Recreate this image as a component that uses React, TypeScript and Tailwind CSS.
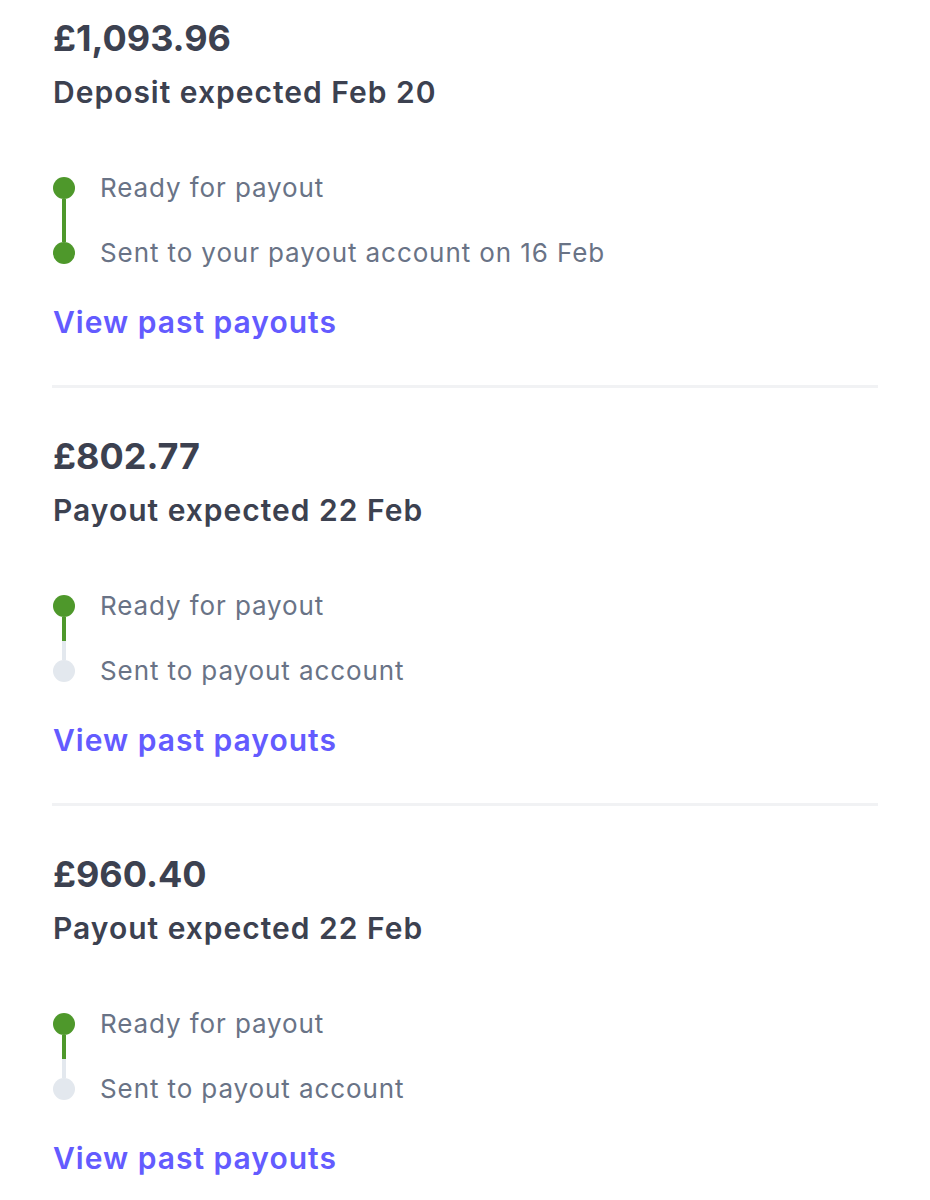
import { Fragment } from 'react';

type Payout = {
  amount: string;
  title: string;
  sentLabel: string;
  sent: boolean;
};

const PAYOUTS: Payout[] = [
  { amount: '£1,093.96', title: 'Deposit expected Feb 20', sentLabel: 'Sent to your payout account on 16 Feb', sent: true },
  { amount: '£802.77', title: 'Payout expected 22 Feb', sentLabel: 'Sent to payout account', sent: false },
  { amount: '£960.40', title: 'Payout expected 22 Feb', sentLabel: 'Sent to payout account', sent: false },
];

function Timeline({ sent, sentLabel }: { sent: boolean; sentLabel: string }) {
  return (
    <div className="flex gap-[25px] mt-[67px]">
      <div className="flex flex-col items-center w-[22px]">
        <div className="w-[22px] h-[22px] rounded-full bg-[#4e982b]" />
        {sent ? (
          <div className="w-[4px] h-[43px] bg-[#4e982b]" />
        ) : (
          <div className="flex flex-col w-[4px] h-[43px]">
            <div className="h-[24px] bg-[#4e982b]" />
            <div className="flex-1 bg-[#e3e8ee]" />
          </div>
        )}
        <div className={`w-[22px] h-[22px] rounded-full ${sent ? 'bg-[#4e982b]' : 'bg-[#e3e8ee]'}`} />
      </div>
      <div className="flex flex-col gap-[43px] text-[26px] leading-[22px] tracking-[0.9px] text-[#697386]">
        <span>Ready for payout</span>
        <span>{sentLabel}</span>
      </div>
    </div>
  );
}

export default function App() {
  return (
    <div className="min-h-[1200px] bg-white px-[52px] pt-[16px]" style={{ fontFamily: 'Inter, "Noto Sans", sans-serif' }}>
      {PAYOUTS.map((p, i) => (
        <Fragment key={i}>
          {i > 0 && <div className="h-[3px] bg-[#f1f2f4] mt-[45px] mb-[46px]" />}
          <section className="pl-[1px]">
            <div className="text-[36px] leading-[44px] font-bold text-[#3c4150]">{p.amount}</div>
            <div className="mt-[14px] text-[30px] leading-[36px] tracking-[1px] font-semibold text-[#3c4150]">{p.title}</div>
            <Timeline sent={p.sent} sentLabel={p.sentLabel} />
            <a className="block mt-[40px] text-[30px] leading-[36px] tracking-[1px] font-semibold text-[#635bff]">View past payouts</a>
          </section>
        </Fragment>
      ))}
    </div>
  );
}
